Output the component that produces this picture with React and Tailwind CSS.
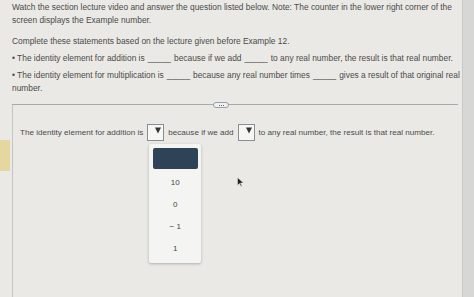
const Blank = () => <span className="mx-[3px]">_____</span>

const SelectBox = ({ children }) => (
  <span className="relative inline-flex align-middle mx-[4px]">
    <span className="inline-flex items-start justify-end w-[17px] h-[17px] border border-[#8a8d92] bg-[#f6f6f4] pr-[2px] pt-[2px]">
      <svg width="6" height="7" viewBox="0 0 6 7"><path d="M0 0.5h6L3 6.5z" fill="#333" /></svg>
    </span>
    {children}
  </span>
)

const options = ['10', '0', '\u2212 1', '1']

const App = () => {
  return (
    <div className="w-[474px] h-[297px] flex bg-[#eae9e5] text-[#4a4a4a] font-['Liberation_Sans',Arial,sans-serif] overflow-hidden">
      <div className="w-[12px] flex flex-col pt-[140px]">
        <div className="h-[31px] w-[10px] bg-[#e6d7a1]" />
      </div>
      <div className="flex-1 flex flex-col">
        <div className="pt-[1px] text-[8.4px] leading-[13px]">
          <p>Watch the section lecture video and answer the question listed below. Note: The counter in the lower right corner of the screen displays the Example number.</p>
          <p className="mt-[8px]">Complete these statements based on the lecture given before Example 12.</p>
          <ul className="mt-[4px] space-y-[4px]">
            <li>• The identity element for addition is<Blank />because if we add<Blank />to any real number, the result is that real number.</li>
            <li>• The identity element for multiplication is<Blank />because any real number times<Blank />gives a result of that original real number.</li>
          </ul>
        </div>
        <div className="relative mt-[9px] mr-[4px] border-t border-[#a9a9a7]">
          <div className="absolute left-[201px] -top-[3px] w-[16px] h-[6px] rounded-full border border-[#9aa0a6] bg-[#eef0f2] flex items-center justify-center gap-[1px]">
            <span className="w-[1px] h-[1px] bg-[#666]" />
            <span className="w-[1px] h-[1px] bg-[#666]" />
            <span className="w-[1px] h-[1px] bg-[#666]" />
          </div>
        </div>
        <div className="flex-1 border-l border-[#c4c4c1] relative">
          <p className="pt-[19px] pl-[7px] text-[8.1px] leading-[17px] whitespace-nowrap">
            The identity element for addition is
            <SelectBox>
              <div className="absolute left-[2px] top-[20px] w-[52px] h-[119px] bg-[#f4f4f2] rounded-[2px] shadow-[0_1px_3px_rgba(0,0,0,0.25)] flex flex-col items-center pt-[4px] z-10">
                <div className="w-[45px] h-[21px] rounded-[2px] bg-[#2f4356]" />
                <div className="flex flex-col items-center gap-[5px] mt-[5px] text-[8px] leading-[17px] text-[#444]">
                  {options.map((o) => <span key={o}>{o}</span>)}
                </div>
              </div>
            </SelectBox>
            because if we add
            <SelectBox />
            to any real number, the result is that real number.
          </p>
          <svg className="absolute left-[224px] top-[72px]" width="7" height="10" viewBox="0 0 7 10">
            <path d="M0.5 0.5v8l2-2 1.5 3 1-0.5-1.5-3h3z" fill="#222" stroke="#eee" strokeWidth="0.5" />
          </svg>
        </div>
      </div>
      <div className="w-[12px] bg-[#d7d7d5] border-l border-[#c9c9c7]" />
    </div>
  )
}

export default App
